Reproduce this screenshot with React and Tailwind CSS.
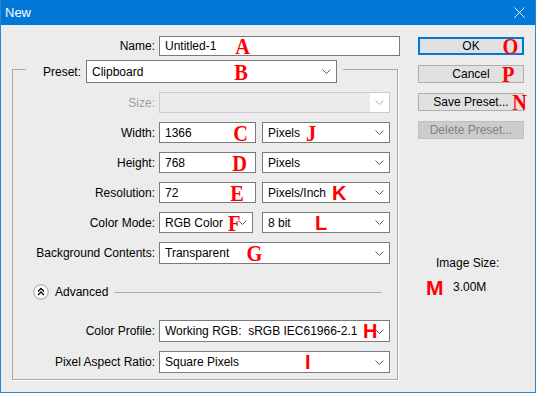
import React from 'react';

const UI_FONT = "font-['Liberation_Sans',Arial,sans-serif]";

const Chevron = ({ color = '#5a5a5a' }) => (
  <svg width="9" height="5" viewBox="0 0 9 5" className="shrink-0">
    <path d="M0.5 0.5 L4.5 4.5 L8.5 0.5" fill="none" stroke={color} strokeWidth="1" />
  </svg>
);

// red annotation letters laid over the fields
const Mark = ({ children, sans, className }) => (
  <span
    className={[
      'absolute top-1/2 -translate-y-1/2 leading-none text-[#ff0000] font-bold pointer-events-none',
      sans
        ? "font-['Liberation_Sans',Arial,sans-serif] text-[20px]"
        : "font-['Liberation_Serif','Times_New_Roman',serif] text-[24px] scale-x-[0.85]",
      className
    ].join(' ')}
  >
    {children}
  </span>
);

const Label = ({ children, muted }) => (
  <span className={`w-[142px] shrink-0 text-right whitespace-nowrap ${muted ? 'text-[#a0a0a0]' : ''}`}>
    {children}
  </span>
);

const TextBox = ({ value, width, mark }) => (
  <div className={`relative h-full ${width} shrink-0 bg-white border border-[#7a7a7a] flex items-center pl-[5px]`}>
    <span className="whitespace-nowrap">{value}</span>
    {mark}
  </div>
);

const Select = ({ value, width, mark, className = '' }) => (
  <div className={`relative h-full ${width} shrink-0 bg-white border border-[#7a7a7a] flex items-center justify-between pl-[5px] pr-[5px] ${className}`}>
    <span className="whitespace-nowrap">{value}</span>
    <Chevron />
    {mark}
  </div>
);

const Button = ({ children, mark, primary, disabled }) => {
  const base = 'relative w-[106px] h-[18px] flex items-center justify-center leading-none';
  let look = 'bg-[#e1e1e1] border border-[#adadad] text-black';
  if (primary) look = 'bg-[#e1e1e1] border-2 border-[#0078d7] text-black';
  if (disabled) look = 'bg-[#cccccc] border border-[#bfbfbf] text-[#838383]';
  return (
    <div className={`${base} ${look}`}>
      {children}
      {mark}
    </div>
  );
};

const AdvancedIcon = () => (
  <svg width="16" height="16" viewBox="0 0 16 16" className="shrink-0">
    <circle cx="8" cy="8" r="7.2" fill="#ffffff" stroke="#9c9c9c" strokeWidth="1" />
    <path d="M5 7.5 L8 4.5 L11 7.5" fill="none" stroke="#000" strokeWidth="1.3" />
    <path d="M5 11 L8 8 L11 11" fill="none" stroke="#000" strokeWidth="1.3" />
  </svg>
);

export default function App() {
  return (
    <div className={`w-[536px] h-[393px] bg-[#ececec] border border-t-0 border-[#2a84d8] flex flex-col text-[12px] text-black ${UI_FONT}`}>
      {/* title bar */}
      <div className="h-[25px] shrink-0 bg-[#0078d7] flex items-center justify-between pl-[4px] pr-[10px] text-white text-[13px]">
        <span>New</span>
        <svg width="11" height="11" viewBox="0 0 11 11">
          <path d="M0.5 0.5 L10.5 10.5 M10.5 0.5 L0.5 10.5" stroke="#ffffff" strokeWidth="1" />
        </svg>
      </div>

      <div className="flex-1 flex pl-[11px]">
        {/* left side */}
        <div className="w-[389px] flex flex-col">
          <div className="mt-[11px] h-[20px] flex items-center gap-[4px]">
            <span className="w-[143px] text-right">Name:</span>
            <TextBox value="Untitled-1" width="w-[241px]" mark={<Mark className="left-[74px]">A</Mark>} />
          </div>

          <div className="mt-[13px] w-[386px] h-[311px] border border-[#a9a9a9] shadow-[1px_1px_0_#ffffff] flex flex-col">
            <div className="-mt-[10px] ml-[13px] w-[317px] h-[23px] shrink-0 bg-[#ececec] flex items-center justify-end gap-[5px] pr-[6px]">
              <span>Preset:</span>
              <Select value="Clipboard" width="w-[251px]" mark={<Mark className="left-[146px]">B</Mark>} />
            </div>

            <div className="mt-[9px] h-[21px] flex items-center gap-[4px]">
              <Label muted>Size:</Label>
              <div className="h-full w-[231px] bg-white border border-[#cccccc] flex items-center justify-between pr-[5px]">
                <div className="h-full w-[210px] bg-[#ebebeb]" />
                <Chevron color="#b4b4b4" />
              </div>
            </div>

            <div className="mt-[9px] h-[21px] flex items-center gap-[4px]">
              <Label>Width:</Label>
              <TextBox value="1366" width="w-[97px]" mark={<Mark className="left-[72px]">C</Mark>} />
              <Select value="Pixels" width="w-[128px]" className="ml-[2px]" mark={<Mark className="left-[42px]">J</Mark>} />
            </div>

            <div className="mt-[9px] h-[21px] flex items-center gap-[4px]">
              <Label>Height:</Label>
              <TextBox value="768" width="w-[97px]" mark={<Mark className="left-[71px]">D</Mark>} />
              <Select value="Pixels" width="w-[128px]" className="ml-[2px]" />
            </div>

            <div className="mt-[9px] h-[21px] flex items-center gap-[4px]">
              <Label>Resolution:</Label>
              <TextBox value="72" width="w-[97px]" mark={<Mark className="left-[69px]">E</Mark>} />
              <Select value="Pixels/Inch" width="w-[128px]" className="ml-[2px]" mark={<Mark sans className="left-[69px]">K</Mark>} />
            </div>

            <div className="mt-[9px] h-[21px] flex items-center gap-[4px]">
              <Label>Color Mode:</Label>
              <Select value="RGB Color" width="w-[94px]" mark={<Mark className="left-[67px]">F</Mark>} />
              <Select value="8 bit" width="w-[128px]" className="ml-[5px]" mark={<Mark sans className="left-[52px]">L</Mark>} />
            </div>

            <div className="mt-[9px] h-[22px] flex items-center gap-[4px]">
              <Label>Background Contents:</Label>
              <Select value="Transparent" width="w-[231px]" mark={<Mark className="left-[85px]">G</Mark>} />
            </div>

            <div className="mt-[20px] h-[16px] flex items-center pl-[20px] pr-[15px]">
              <AdvancedIcon />
              <span className="ml-[6px]">Advanced</span>
              <div className="flex-1 ml-[6px] h-px bg-[#a9a9a9]" />
            </div>

            <div className="mt-[20px] h-[22px] flex items-center gap-[4px]">
              <Label>Color Profile:</Label>
              <Select
                value={'Working RGB:\u00a0 sRGB IEC61966-2.1'}
                width="w-[231px]"
                mark={<Mark sans className="left-[203px]">H</Mark>}
              />
            </div>

            <div className="mt-[9px] h-[22px] flex items-center gap-[4px]">
              <Label>Pixel Aspect Ratio:</Label>
              <Select value="Square Pixels" width="w-[231px]" mark={<Mark sans className="left-[145px]">I</Mark>} />
            </div>
          </div>
        </div>

        {/* right side */}
        <div className="ml-[17px] w-[106px] flex flex-col">
          <div className="mt-[12px]">
            <Button primary mark={<Mark className="left-[81px]">O</Mark>}>OK</Button>
          </div>
          <div className="mt-[10px]">
            <Button mark={<Mark className="left-[82px]">P</Mark>}>Cancel</Button>
          </div>
          <div className="mt-[10px]">
            <Button mark={<Mark className="left-[92px] text-[19px]">N</Mark>}>Save Preset...</Button>
          </div>
          <div className="mt-[10px]">
            <Button disabled>Delete Preset...</Button>
          </div>

          <div className="mt-[117px] pl-[18px] leading-[14px] whitespace-nowrap">Image Size:</div>
          <div className="mt-[8px] h-[18px] flex items-center pl-[8px]">
            <span className="leading-none text-[#ff0000] font-bold text-[21px] w-[27px]">M</span>
            <span>3.00M</span>
          </div>
        </div>
      </div>
    </div>
  );
}
